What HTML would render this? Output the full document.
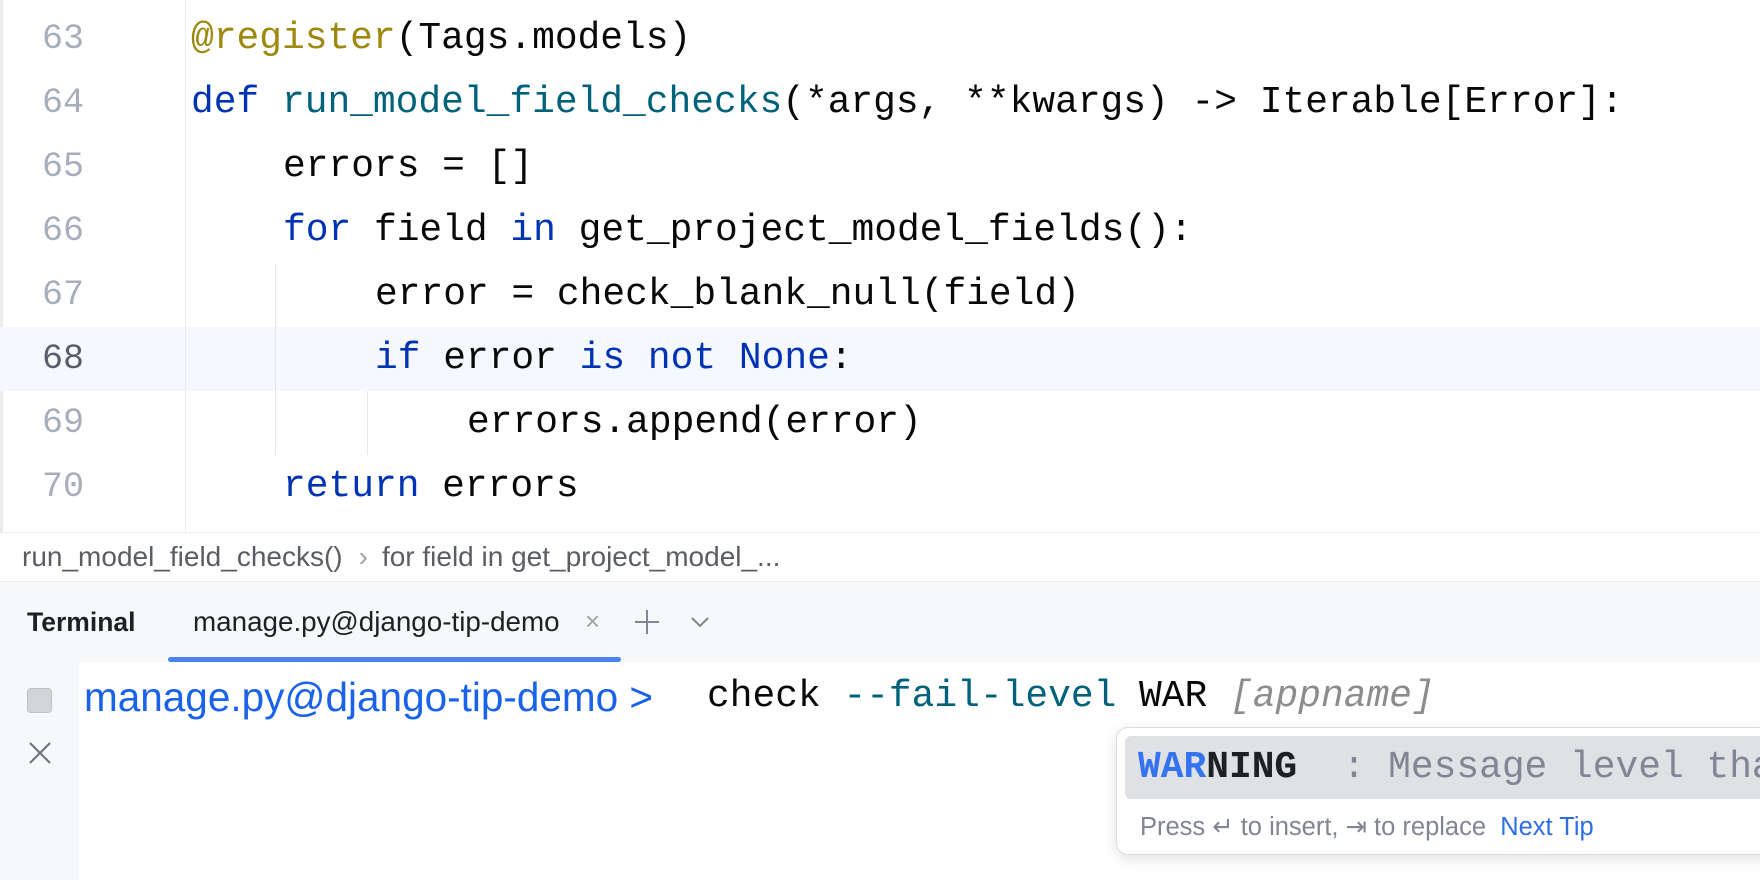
<!DOCTYPE html>
<html><head><meta charset="utf-8"><style>
*{margin:0;padding:0;box-sizing:border-box}
body{width:1760px;height:880px;overflow:hidden;background:#fff;position:relative;font-family:"Liberation Sans",sans-serif}
.ln{position:absolute;left:0;width:84px;text-align:right;font-family:"Liberation Mono",monospace;font-size:35px;color:#a8adbd;height:64px;line-height:64px}
.cl{position:absolute;font-family:"Liberation Mono",monospace;font-size:37.9px;color:#080808;height:64px;line-height:64px;white-space:pre}
.k{color:#0033b3}.f{color:#00627a}.d{color:#9e880d}
.abs{position:absolute}
</style></head><body>
<div class="abs" style="left:0;top:0;width:3px;height:532px;background:#ebecf0"></div>
<div class="abs" style="left:0;top:327px;width:1760px;height:64px;background:#f5f8fe"></div>
<div class="abs" style="left:185px;top:0;width:1px;height:532px;background:#ebecf0"></div>
<div class="abs" style="left:275px;top:264px;width:1px;height:191px;background:#e6e7eb"></div>
<div class="abs" style="left:367px;top:391px;width:1px;height:64px;background:#e6e7eb"></div>

<div class="ln" style="top:7px">63</div>
<div class="ln" style="top:71px">64</div>
<div class="ln" style="top:135px">65</div>
<div class="ln" style="top:199px">66</div>
<div class="ln" style="top:263px">67</div>
<div class="ln" style="top:327px;color:#5a5d6b">68</div>
<div class="ln" style="top:391px">69</div>
<div class="ln" style="top:455px">70</div>

<div class="cl" style="left:191px;top:7px"><span class="d">@register</span>(Tags.models)</div>
<div class="cl" style="left:191px;top:71px"><span class="k">def</span> <span class="f">run_model_field_checks</span>(*args, **kwargs) -&gt; Iterable[Error]:</div>
<div class="cl" style="left:283px;top:135px">errors = []</div>
<div class="cl" style="left:283px;top:199px"><span class="k">for</span> field <span class="k">in</span> get_project_model_fields():</div>
<div class="cl" style="left:375px;top:263px">error = check_blank_null(field)</div>
<div class="cl" style="left:375px;top:327px"><span class="k">if</span> error <span class="k">is</span> <span class="k">not</span> <span class="k">None</span>:</div>
<div class="cl" style="left:467px;top:391px">errors.append(error)</div>
<div class="cl" style="left:283px;top:455px"><span class="k">return</span> errors</div>

<div class="abs" style="left:0;top:532px;width:1760px;height:1px;background:#ebecf0"></div>
<div class="abs" style="left:22px;top:537px;font-size:28px;color:#5a5d63;line-height:40px;white-space:pre">run_model_field_checks()<span style="color:#a0a3ab;margin:0 14px 0 16px">›</span>for field in get_project_model_...</div>

<div class="abs" style="left:0;top:581px;width:1760px;height:81px;background:#f7f8fa;border-top:1px solid #ebecf0"></div>
<div class="abs" style="left:27px;top:603px;font-size:26.5px;font-weight:bold;color:#1f2023;line-height:38px">Terminal</div>
<div class="abs" style="left:193px;top:603px;font-size:27.8px;color:#1f2023;line-height:38px">manage.py@django-tip-demo</div>
<div class="abs" style="left:585px;top:603px;font-size:26px;color:#a0a3ab;line-height:36px">×</div>
<svg class="abs" style="left:634px;top:609px" width="26" height="26"><path d="M13 1V25M1 13H25" stroke="#818594" stroke-width="2"/></svg>
<svg class="abs" style="left:690px;top:616px" width="20" height="12"><path d="M2 2L10 10L18 2" stroke="#818594" stroke-width="2" fill="none"/></svg>
<div class="abs" style="left:168px;top:657px;width:453px;height:5px;border-radius:3px;background:#4a82f0"></div>

<div class="abs" style="left:0;top:662px;width:79px;height:218px;background:#f7f8fa"></div>
<div class="abs" style="left:27px;top:688px;width:25px;height:25px;border-radius:4px;background:#d3d4d7;border:1px solid #c0c2c6"></div>
<svg class="abs" style="left:28px;top:741px" width="24" height="24"><path d="M2 2L22 22M22 2L2 22" stroke="#6c707e" stroke-width="2"/></svg>

<div class="abs" style="left:84px;top:674px;font-size:40.5px;color:#1a62ea;line-height:46px;white-space:pre">manage.py@django-tip-demo &gt;</div>
<div class="cl" style="left:707px;top:665px"><span>check</span> <span class="f">--fail-level</span> WAR <i style="color:#8c8c8c">[appname]</i></div>

<div class="abs" style="left:1116px;top:727px;width:660px;height:128px;border-radius:12px;background:#fff;border:1px solid #dcdde1;box-shadow:0 4px 14px rgba(0,0,0,0.12)"></div>
<div class="abs" style="left:1125px;top:736px;width:650px;height:63px;border-radius:6px;background:#dfe1e5"></div>
<div class="cl" style="left:1138px;top:736px;height:63px;line-height:63px;font-weight:bold"><span style="color:#3574f0">WAR</span><span style="color:#1f2023">NING</span><span style="font-weight:normal;color:#818594">  : Message level tha</span></div>
<div class="abs" style="left:1140px;top:810px;font-size:25.5px;color:#818594;line-height:34px;white-space:pre">Press ↵ to insert, ⇥ to replace  <span style="color:#2f6fe6">Next Tip</span></div>
</body></html>
